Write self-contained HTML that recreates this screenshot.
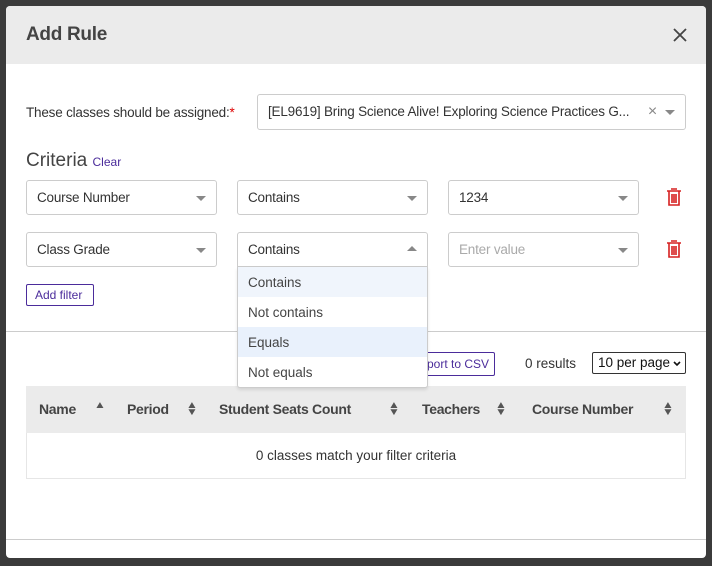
<!DOCTYPE html>
<html><head><style>
*{box-sizing:border-box;margin:0;padding:0}
body{width:712px;height:566px;background:#3b3b3b;font-family:"Liberation Sans",sans-serif;color:#333;position:relative;overflow:hidden;font-size:13px}
.m{position:absolute;left:6px;top:6px;width:700px;height:552px;background:#fff;border-radius:4px;overflow:hidden}
.hd{height:58px;background:#ebebeb;position:relative}
.hd h1{position:absolute;left:20px;top:18px;font-size:19px;font-weight:bold;color:#444;letter-spacing:-0.3px}
.x{position:absolute;right:18px;top:21px}
.a{position:absolute}
.sel{position:absolute;border:1px solid #ccc;border-radius:3px;height:35px;font-size:13.5px;padding:9px 10px;color:#333;background:#fff;letter-spacing:-0.2px;white-space:nowrap}
.car{position:absolute;right:10px;top:15px;width:0;height:0;border-left:5px solid transparent;border-right:5px solid transparent;border-top:5px solid #888}
.up{border-top:0;border-bottom:5px solid #888;top:13px}
.dd{position:absolute;left:231px;top:261px;width:191px;height:121px;border:1px solid #ccc;border-top:0;background:#fff;border-radius:0 0 3px 3px;box-shadow:0 2px 3px rgba(0,0,0,.1);font-size:13.5px}
.dd div{height:30px;padding:8px 10px;color:#444}
.th{position:absolute;left:20px;top:380px;width:660px;height:47px;background:#ebebeb;font-weight:bold;font-size:14px;color:#444}
.th span{position:absolute;top:15px;letter-spacing:-0.3px}
.so{position:absolute;top:16px;font-size:10px;color:#555;line-height:7px;transform:scaleX(1.2)}
</style></head><body>
<div class="m">
<div class="hd"><h1>Add Rule</h1>
<svg class="x" width="16" height="16" viewBox="0 0 16 16"><path d="M2 2L14 14M14 2L2 14" stroke="#444" stroke-width="1.8"/></svg></div>
<div class="a" style="left:20px;top:99px;font-size:13.5px;letter-spacing:-0.2px">These classes should be assigned:<span style="color:#d00">*</span></div>
<div class="sel" style="left:251px;top:88px;width:429px;height:36px">[EL9619] Bring Science Alive! Exploring Science Practices G...<span style="position:absolute;right:28px;top:8px;color:#888;font-size:16px">×</span><div class="car"></div></div>
<div class="a" style="left:20px;top:144px;font-size:19px;color:#444">Criteria <span style="font-size:12px;color:#4b2c9b">Clear</span></div>
<div class="sel" style="left:20px;top:174px;width:191px">Course Number<div class="car"></div></div>
<div class="sel" style="left:231px;top:174px;width:191px">Contains<div class="car"></div></div>
<div class="sel" style="left:442px;top:174px;width:191px">1234<div class="car"></div></div>
<div class="sel" style="left:20px;top:226px;width:191px">Class Grade<div class="car"></div></div>
<div class="sel" style="left:231px;top:226px;width:191px;border-radius:3px 3px 0 0">Contains<div class="car up"></div></div>
<div class="sel" style="left:442px;top:226px;width:191px;color:#aaa">Enter value<div class="car"></div></div>
<svg class="a" style="left:660px;top:181px" width="16" height="20" viewBox="0 0 16 20"><path d="M5 2h6M1 4h14M3 4v14h10V4M6 7v9M8 7v9M10 7v9" stroke="#d62020" stroke-width="1.6" fill="none"/></svg>
<svg class="a" style="left:660px;top:233px" width="16" height="20" viewBox="0 0 16 20"><path d="M5 2h6M1 4h14M3 4v14h10V4M6 7v9M8 7v9M10 7v9" stroke="#d62020" stroke-width="1.6" fill="none"/></svg>
<div class="a" style="left:20px;top:278px;width:68px;height:22px;border:1px solid #4b2c9b;border-radius:2px;color:#4b2c9b;font-size:12px;padding:3px 8px">Add filter</div>
<div class="a" style="left:0;top:325px;width:700px;height:1px;background:#ccc"></div>
<div class="a" style="left:400px;top:346px;width:89px;height:24px;border:1px solid #4b2c9b;border-radius:2px;color:#4b2c9b;font-size:12px;padding:4px 0 0 20px">port to CSV</div>
<div class="a" style="left:519px;top:350px;font-size:13.5px">0 results</div>
<div class="a" style="left:586px;top:346px;width:94px;height:22px;border:1px solid #333;border-radius:2px;font-size:13.5px;padding:2px 5px;color:#111;white-space:nowrap">10 per page
<svg style="position:absolute;right:4px;top:8px" width="8" height="6" viewBox="0 0 8 6"><path d="M1 1l3 3 3-3" stroke="#111" stroke-width="1.6" fill="none"/></svg></div>
<div class="th"><span style="left:13px">Name</span><div class="so" style="left:69px">▲</div>
<span style="left:101px">Period</span><div class="so" style="left:161px">▲<br>▼</div>
<span style="left:193px">Student Seats Count</span><div class="so" style="left:363px">▲<br>▼</div>
<span style="left:396px">Teachers</span><div class="so" style="left:470px">▲<br>▼</div>
<span style="left:506px">Course Number</span><div class="so" style="left:637px">▲<br>▼</div></div>
<div class="a" style="left:20px;top:427px;width:660px;height:46px;border:1px solid #e6e6e6;border-top:0;text-align:center;padding-top:15px;font-size:13.5px">0 classes match your filter criteria</div>
<div class="a" style="left:0;top:533px;width:700px;height:1px;background:#ccc"></div>
<div class="dd"><div style="background:#f0f5fc">Contains</div><div>Not contains</div><div style="background:#e9f1fc">Equals</div><div>Not equals</div></div>
</div>
</body></html>
